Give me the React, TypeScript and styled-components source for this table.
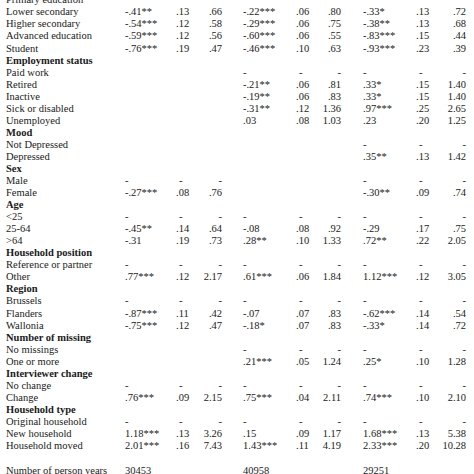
import styled, { createGlobalStyle } from "styled-components";

type Cell = [string, string, string] | null;

interface IRow {
  label: string;
  bold?: boolean;
  groups?: Cell[];
}

const D: Cell = ["-", "-", "-"];

const rows: IRow[] = [
  { label: "Primary education", groups: [null, null, null] },
  { label: "Lower secondary", groups: [["-.41**", ".13", ".66"], ["-.22***", ".06", ".80"], ["-.33*", ".13", ".72"]] },
  { label: "Higher secondary", groups: [["-.54***", ".12", ".58"], ["-.29***", ".06", ".75"], ["-.38**", ".13", ".68"]] },
  { label: "Advanced education", groups: [["-.59***", ".12", ".56"], ["-.60***", ".06", ".55"], ["-.83***", ".15", ".44"]] },
  { label: "Student", groups: [["-.76***", ".19", ".47"], ["-.46***", ".10", ".63"], ["-.93***", ".23", ".39"]] },
  { label: "Employment status", bold: true },
  { label: "Paid work", groups: [null, D, D] },
  { label: "Retired", groups: [null, ["-.21**", ".06", ".81"], [".33*", ".15", "1.40"]] },
  { label: "Inactive", groups: [null, ["-.19**", ".06", ".83"], [".33*", ".15", "1.40"]] },
  { label: "Sick or disabled", groups: [null, ["-.31**", ".12", "1.36"], [".97***", ".25", "2.65"]] },
  { label: "Unemployed", groups: [null, [".03", ".08", "1.03"], [".23", ".20", "1.25"]] },
  { label: "Mood", bold: true },
  { label: "Not Depressed", groups: [null, null, D] },
  { label: "Depressed", groups: [null, null, [".35**", ".13", "1.42"]] },
  { label: "Sex", bold: true },
  { label: "Male", groups: [D, null, D] },
  { label: "Female", groups: [["-.27***", ".08", ".76"], null, ["-.30**", ".09", ".74"]] },
  { label: "Age", bold: true },
  { label: "<25", groups: [D, D, D] },
  { label: "25-64", groups: [["-.45**", ".14", ".64"], ["-.08", ".08", ".92"], ["-.29", ".17", ".75"]] },
  { label: ">64", groups: [["-.31", ".19", ".73"], [".28**", ".10", "1.33"], [".72**", ".22", "2.05"]] },
  { label: "Household position", bold: true },
  { label: "Reference or partner", groups: [D, D, D] },
  { label: "Other", groups: [[".77***", ".12", "2.17"], [".61***", ".06", "1.84"], ["1.12***", ".12", "3.05"]] },
  { label: "Region", bold: true },
  { label: "Brussels", groups: [D, D, D] },
  { label: "Flanders", groups: [["-.87***", ".11", ".42"], ["-.07", ".07", ".83"], ["-.62***", ".14", ".54"]] },
  { label: "Wallonia", groups: [["-.75***", ".12", ".47"], ["-.18*", ".07", ".83"], ["-.33*", ".14", ".72"]] },
  { label: "Number of missing", bold: true },
  { label: "No missings", groups: [null, D, D] },
  { label: "One or more", groups: [null, [".21***", ".05", "1.24"], [".25*", ".10", "1.28"]] },
  { label: "Interviewer change", bold: true },
  { label: "No change", groups: [D, D, D] },
  { label: "Change", groups: [[".76***", ".09", "2.15"], [".75***", ".04", "2.11"], [".74***", ".10", "2.10"]] },
  { label: "Household type", bold: true },
  { label: "Original household", groups: [D, D, D] },
  { label: "New household", groups: [["1.18***", ".13", "3.26"], [".15", ".09", "1.17"], ["1.68***", ".13", "5.38"]] },
  { label: "Household moved", groups: [["2.01***", ".16", "7.43"], ["1.43***", ".11", "4.19"], ["2.33***", ".20", "10.28"]] },
];

const totals = ["30453", "40958", "29251"];

const GlobalStyle = createGlobalStyle`
  html, body {
    margin: 0;
    padding: 0;
    background: #ffffff;
    overflow: hidden;
  }
`;

const Page = styled.div`
  padding-left: 6px;
  margin-top: -5.7px;
  font-family: "Liberation Serif", "Times New Roman", serif;
  font-size: 10.5px;
  color: #1a1a1a;
`;

const Row = styled.div`
  display: grid;
  grid-template-columns: 119px 51px 24px 22px 74px 22px 23px 75px 22px 28px;
  height: 12.06px;
  line-height: 12.06px;
  white-space: nowrap;
`;

const Spacer = styled.div`
  height: 13px;
`;

const Label = styled.div<{ $bold?: boolean }>`
  font-weight: ${(p) => (p.$bold ? "bold" : "normal")};
  grid-column: ${(p) => (p.$bold ? "1 / -1" : "auto")};
`;

const Coef = styled.div<{ $indent: number }>`
  padding-left: ${(p) => p.$indent}px;
`;

const Se = styled.div<{ $dash?: boolean }>`
  padding-left: ${(p) => (p.$dash ? 3 : 0)}px;
`;

const Or = styled.div`
  text-align: right;
`;

const indents = [0, 21, 22];

function Group({ cell, index }: { cell: Cell; index: number }) {
  const [c, s, o] = cell ?? ["", "", ""];
  return (
    <>
      <Coef $indent={indents[index]}>{c}</Coef>
      <Se $dash={s === "-"}>{s}</Se>
      <Or>{o}</Or>
    </>
  );
}

function App() {
  return (
    <Page>
      <GlobalStyle />
      {rows.map((r) => (
        <Row key={r.label}>
          <Label $bold={r.bold}>{r.label}</Label>
          {r.groups?.map((g, i) => (
            <Group key={i} cell={g} index={i} />
          ))}
        </Row>
      ))}
      <Spacer />
      <Row>
        <Label>Number of person years</Label>
        {totals.map((t, i) => (
          <Group key={i} cell={[t, "", ""]} index={i} />
        ))}
      </Row>
    </Page>
  );
}

export default App;
